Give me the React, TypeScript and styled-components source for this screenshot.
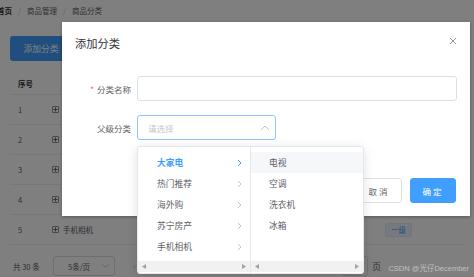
import React from 'react';
import styled, { createGlobalStyle } from 'styled-components';

const GlobalStyle = createGlobalStyle`
  html, body {
    margin: 0;
    padding: 0;
  }
  body {
    width: 474px;
    height: 277px;
    overflow: hidden;
    background: #fff;
    font-family: 'Noto Sans CJK SC', 'Noto Sans', sans-serif;
  }
`;

const Page = styled.div`
  position: relative;
  width: 474px;
  height: 277px;
  overflow: hidden;
  background: #fff;
  color: #606266;
  font-size: 7.5px;
`;

const Breadcrumb = styled.div`
  display: flex;
  align-items: center;
  height: 20px;
  margin-left: -3px;
  font-size: 7.5px;
`;

const Crumb = styled.span<{ $strong?: boolean }>`
  color: ${(p) => (p.$strong ? '#303133' : '#606266')};
  font-weight: ${(p) => (p.$strong ? 700 : 400)};
`;

const Sep = styled.span`
  color: #c0c4cc;
  margin: 0 6px;
`;

const Card = styled.div`
  padding: 16px 10px 0;
`;

const PrimaryButton = styled.button`
  display: flex;
  align-items: center;
  justify-content: center;
  width: 62px;
  height: 25px;
  padding: 0;
  border: none;
  border-radius: 3px;
  background: #409eff;
  color: #fff;
  font-family: inherit;
  font-size: 8.75px;
`;

const Table = styled.div`
  margin-top: 11px;
`;

const Row = styled.div<{ $head?: boolean }>`
  display: grid;
  grid-template-columns: 40px 325px 1fr;
  align-items: center;
  box-sizing: border-box;
  height: ${(p) => (p.$head ? 23 : 30)}px;
  border-bottom: 1px solid #ebeef5;
  color: ${(p) => (p.$head ? '#303133' : '#606266')};
  font-weight: ${(p) => (p.$head ? 700 : 400)};
`;

const Cell = styled.div`
  display: flex;
  align-items: center;
  gap: 4px;
  padding-left: 8px;
`;

const NameCell = styled.div`
  display: flex;
  align-items: center;
  gap: 4px;
  padding-left: 2px;
`;

const ExpandBox = styled.span`
  display: flex;
  align-items: center;
  justify-content: center;
  box-sizing: border-box;
  width: 7px;
  height: 7px;
  border: 1px solid #909399;
  border-radius: 1px;
`;

const Tag = styled.span`
  justify-self: start;
  margin-left: 10px;
  padding: 0 5px;
  height: 12px;
  line-height: 12px;
  border: 1px solid #d9ecff;
  border-radius: 2px;
  background: #ecf5ff;
  color: #409eff;
  font-size: 7.5px;
`;

const Pager = styled.div`
  display: flex;
  align-items: center;
  height: 20px;
  margin-top: 11px;
  padding: 0 93px 0 13px;
`;

const Total = styled.span`
  width: 30px;
  white-space: nowrap;
`;

const SizeSelect = styled.div`
  display: flex;
  align-items: center;
  justify-content: space-between;
  box-sizing: border-box;
  width: 62px;
  height: 20px;
  margin-left: 10px;
  padding: 0 5px 0 14px;
  border: 1px solid #dcdfe6;
  border-radius: 3px;
`;

const PrevButton = styled.span`
  margin-left: 18px;
  color: #c0c4cc;
  font-size: 9px;
`;

const Pages = styled.div`
  display: flex;
  flex: 1;
  gap: 10px;
  margin-left: 12px;
`;

const Jumper = styled.div`
  display: flex;
  align-items: center;
  gap: 4px;
  font-size: 9px;
`;

const JumpInput = styled.span`
  display: flex;
  align-items: center;
  justify-content: center;
  box-sizing: border-box;
  width: 26px;
  height: 20px;
  border: 1px solid #dcdfe6;
  border-radius: 3px;
`;

const Watermark = styled.div`
  position: absolute;
  right: 5px;
  bottom: 4px;
  color: rgba(255, 255, 255, 0.5);
  font-family: 'Liberation Sans', 'Noto Sans CJK SC', sans-serif;
  font-size: 7.5px;
  z-index: 5;
`;

const Overlay = styled.div`
  position: absolute;
  inset: 0;
  background: rgba(0, 0, 0, 0.5);
`;

const Dialog = styled.div`
  position: absolute;
  left: 62px;
  top: 22px;
  display: flex;
  flex-direction: column;
  width: 408px;
  height: 194px;
  background: #fff;
  box-shadow: 0 1px 3px rgba(0, 0, 0, 0.3);
`;

const DialogHeader = styled.div`
  position: relative;
  box-sizing: border-box;
  height: 30px;
  padding: 13px 13px 0;
`;

const Title = styled.div`
  color: #303133;
  font-size: 11.25px;
  line-height: 16px;
`;

const CloseButton = styled.span`
  position: absolute;
  right: 13px;
  top: 15px;
  display: flex;
`;

const DialogBody = styled.div`
  display: flex;
  flex-direction: column;
  gap: 14px;
  padding: 24px 13px 0 0;
`;

const FormItem = styled.div`
  display: flex;
  align-items: center;
  height: 25px;
`;

const Label = styled.label`
  box-sizing: border-box;
  width: 75px;
  padding-right: 6px;
  color: #606266;
  font-size: 8.5px;
  text-align: right;
`;

const Required = styled.span`
  margin-right: 3px;
  color: #f56c6c;
`;

const TextInput = styled.div`
  flex: 1;
  box-sizing: border-box;
  height: 25px;
  border: 1px solid #dcdfe6;
  border-radius: 3px;
`;

const SelectBox = styled.div`
  display: flex;
  align-items: center;
  justify-content: space-between;
  box-sizing: border-box;
  width: 139px;
  height: 25px;
  padding: 0 5px 0 10px;
  border: 1px solid #8cc5ff;
  border-radius: 3px;
  color: #c0c4cc;
  font-size: 8.5px;
`;

const DialogFooter = styled.div`
  display: flex;
  justify-content: flex-end;
  gap: 8px;
  margin-top: auto;
  padding: 0 14px 13px 0;
`;

const FooterButton = styled.button<{ $primary?: boolean }>`
  box-sizing: border-box;
  width: 46px;
  height: 25px;
  padding: 0;
  border: 1px solid ${(p) => (p.$primary ? '#409eff' : '#dcdfe6')};
  border-radius: 3px;
  background: ${(p) => (p.$primary ? '#409eff' : '#fff')};
  color: ${(p) => (p.$primary ? '#fff' : '#606266')};
  font-family: inherit;
  font-size: 8.5px;
  letter-spacing: 2px;
`;

const Cascader = styled.div`
  position: absolute;
  left: 137px;
  top: 146px;
  display: flex;
  box-sizing: border-box;
  width: 227px;
  height: 128px;
  border: 1px solid #e4e7ed;
  border-radius: 3px;
  background: #fff;
  box-shadow: 0 2px 12px rgba(0, 0, 0, 0.12);
  z-index: 3;
`;

const Panel = styled.div<{ $divider?: boolean }>`
  display: flex;
  flex-direction: column;
  width: 112px;
  border-right: ${(p) => (p.$divider ? '1px solid #e4e7ed' : 'none')};
`;

const MenuList = styled.div`
  flex: 1;
  padding-top: 5px;
`;

const MenuItem = styled.div<{ $active?: boolean; $hover?: boolean; $inset?: number }>`
  display: flex;
  align-items: center;
  justify-content: space-between;
  height: 21px;
  padding: 0 8px 0 ${(p) => p.$inset ?? 19}px;
  background: ${(p) => (p.$hover ? '#f5f7fa' : 'transparent')};
  color: ${(p) => (p.$active ? '#409eff' : '#606266')};
  font-weight: ${(p) => (p.$active ? 700 : 400)};
  font-size: 8.75px;
`;

const ScrollBar = styled.div`
  display: flex;
  align-items: center;
  justify-content: space-between;
  height: 11px;
  margin-bottom: 1px;
  padding: 0 4px;
  background: #f1f1f1;
`;

const Chevron = ({ color = '#c0c4cc' }: { color?: string }) => (
  <svg width="5" height="8" viewBox="0 0 5 8">
    <polyline points="1,1 4,4 1,7" fill="none" stroke={color} strokeWidth="1" />
  </svg>
);

const Triangle = ({ dir }: { dir: 'left' | 'right' }) => (
  <svg width="4" height="5" viewBox="0 0 4 5">
    <polygon points={dir === 'left' ? '4,0 0,2.5 4,5' : '0,0 4,2.5 0,5'} fill="#a3a3a3" />
  </svg>
);

const rows = [
  { id: 1, name: '大家电' },
  { id: 2, name: '热门推荐' },
  { id: 3, name: '海外购' },
  { id: 4, name: '苏宁房产' },
  { id: 5, name: '手机相机' },
];

const parents = ['大家电', '热门推荐', '海外购', '苏宁房产', '手机相机'];
const children = ['电视', '空调', '洗衣机', '冰箱'];

const App = () => {
  return (
    <Page>
      <GlobalStyle />
      <Breadcrumb>
        <Crumb $strong>首页</Crumb>
        <Sep>/</Sep>
        <Crumb>商品管理</Crumb>
        <Sep>/</Sep>
        <Crumb>商品分类</Crumb>
      </Breadcrumb>
      <Card>
        <PrimaryButton>添加分类</PrimaryButton>
        <Table>
          <Row $head>
            <Cell>序号</Cell>
            <NameCell />
            <Cell />
          </Row>
          {rows.map((row) => (
            <Row key={row.id}>
              <Cell>{row.id}</Cell>
              <NameCell>
                <ExpandBox>
                  <svg width="5" height="5" viewBox="0 0 5 5">
                    <path d="M2.5 0.5v4M0.5 2.5h4" stroke="#606266" strokeWidth="1" />
                  </svg>
                </ExpandBox>
                {row.name}
              </NameCell>
              <Tag>一级</Tag>
            </Row>
          ))}
        </Table>
      </Card>
      <Pager>
        <Total>共 30 条</Total>
        <SizeSelect>
          5条/页
          <svg width="7" height="4" viewBox="0 0 7 4">
            <polyline points="0.5,0.5 3.5,3.5 6.5,0.5" fill="none" stroke="#c0c4cc" />
          </svg>
        </SizeSelect>
        <PrevButton>‹</PrevButton>
        <Pages>
          {[1, 2, 3, 4, 5, 6].map((n) => (
            <span key={n}>{n}</span>
          ))}
        </Pages>
        <Jumper>
          前往
          <JumpInput>1</JumpInput>
          页
        </Jumper>
      </Pager>

      <Overlay />
      <Dialog>
        <DialogHeader>
          <Title>添加分类</Title>
          <CloseButton>
            <svg width="8" height="8" viewBox="0 0 8 8">
              <path d="M1 1L7 7M7 1L1 7" stroke="#909399" strokeWidth="1" />
            </svg>
          </CloseButton>
        </DialogHeader>
        <DialogBody>
          <FormItem>
            <Label>
              <Required>*</Required>分类名称
            </Label>
            <TextInput />
          </FormItem>
          <FormItem>
            <Label>父级分类</Label>
            <SelectBox>
              请选择
              <svg width="10" height="6" viewBox="0 0 10 6">
                <polyline points="1,5 5,1 9,5" fill="none" stroke="#c0c4cc" strokeWidth="1" />
              </svg>
            </SelectBox>
          </FormItem>
        </DialogBody>
        <DialogFooter>
          <FooterButton>取消</FooterButton>
          <FooterButton $primary>确定</FooterButton>
        </DialogFooter>
      </Dialog>

      <Cascader>
        <Panel $divider>
          <MenuList>
            {parents.map((name, i) => (
              <MenuItem key={name} $active={i === 0}>
                {name}
                <Chevron color={i === 0 ? '#409eff' : '#c0c4cc'} />
              </MenuItem>
            ))}
          </MenuList>
          <ScrollBar>
            <Triangle dir="left" />
            <Triangle dir="right" />
          </ScrollBar>
        </Panel>
        <Panel>
          <MenuList>
            {children.map((name, i) => (
              <MenuItem key={name} $hover={i === 0} $inset={18}>
                {name}
              </MenuItem>
            ))}
          </MenuList>
          <ScrollBar>
            <Triangle dir="left" />
            <Triangle dir="right" />
          </ScrollBar>
        </Panel>
      </Cascader>
      <Watermark>CSDN @光仔December</Watermark>
    </Page>
  );
};

export default App;
